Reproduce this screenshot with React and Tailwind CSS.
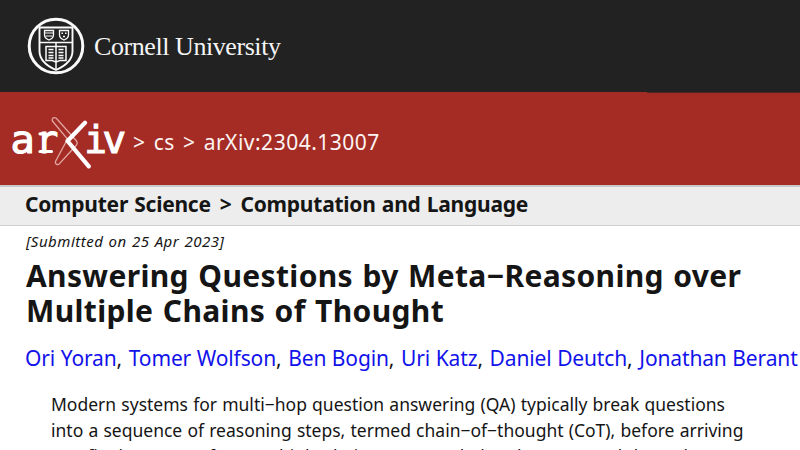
const sans = "font-['Noto_Sans','Open_Sans',sans-serif]";

function CornellSeal() {
  return (
    <svg className="h-[58px] w-[58px] shrink-0" viewBox="0 0 58 58" fill="none" stroke="#fafafa">
      <circle cx="29" cy="29" r="26.8" strokeWidth="3" />
      <path d="M12.5 10.5H45.5V34C45.5 44 37 49.500 29 53C21 49.500 12.500 44 12.500 34Z" strokeWidth="1.9" />
      <path d="M12.500 25.500H45.500M29 25.500V53" strokeWidth="1.5" />
      <path d="M17.500 13.500H26.500V18C26.500 20.500 24.500 22 22 23C19.500 22 17.500 20.500 17.500 18Z" strokeWidth="1.3" />
      <path d="M17.500 16H26.500M18.500 19H25.500" strokeWidth="1.1" />
      <path d="M32.500 13.500H41.500V18C41.500 20.500 39.500 22 37 23C34.500 22 32.500 20.500 32.500 18Z" strokeWidth="1.300" />
      <path d="M34.500 16.200H36M38 16.200H39.500M36 19.500H38" strokeWidth="1.600" />
      <path d="M19 29.500H39V43.500H33L29 45L25 43.500H19Z" strokeWidth="1.500" />
      <path d="M21.500 32.500H26.500M21.500 35.500H26.500M21.500 38.500H26.500M21.500 41H26.500M31.500 32.500H36.500M31.500 35.500H36.500M31.500 38.500H36.500M31.500 41H36.500" strokeWidth="1.500" />
    </svg>
  );
}

function ArxivLogo() {
  return (
    <svg className="h-[54px] w-[116px] shrink-0" viewBox="12 115 116 54" fill="none">
      <g fill="#fff" stroke="#fff" strokeWidth="1.1" fontFamily="'DejaVu Sans Mono', monospace" fontSize="37">
        <text transform="translate(10.500 152.800) scale(1.090 1)">a</text>
        <text transform="translate(36 152.800)">r</text>
        <text transform="translate(84.500 152.800)">i</text>
        <text transform="translate(102.600 152.800) scale(1.060 1)">v</text>
      </g>
      <path d="M40 151.500H51.500M40 133.800H45" stroke="#fff" strokeWidth="3.200" strokeLinecap="round" />
      <path d="M56.300 118.200Q54 116.800 52.500 118.500Q51.500 120 52.800 121.500L67.500 139L55.500 161.500Q55 164 57 164.500Q59 165 60 163L76.500 145Q78 143 76.500 141Z" stroke="#e3a5a1" strokeWidth="1.300" fill="#a42c25" />
      <path d="M85 122.800L67.500 141L88.800 166.300" stroke="#fff" strokeWidth="4.200" strokeLinecap="round" strokeLinejoin="round" />
    </svg>
  );
}

const authors = ["Ori Yoran", "Tomer Wolfson", "Ben Bogin", "Uri Katz", "Daniel Deutch", "Jonathan Berant"];

export default function App() {
  return (
    <div className={`flex h-[450px] w-[800px] flex-col overflow-hidden bg-white whitespace-nowrap text-[#151515] ${sans}`}>
      <header className="flex h-[92px] shrink-0 items-center bg-[#222] pl-[27px]">
        <CornellSeal />
        <span className="ml-[9px] pt-px font-['Palatino','Liberation_Serif',serif] text-[26px] leading-[30px] tracking-[-0.43px] text-[#f5f5f5]">
          Cornell University
        </span>
      </header>
      <div className="flex h-[93px] shrink-0 flex-col bg-[#a42c25]">
        <div className="ml-[647px] h-px shrink-0 bg-[#4a2523]" />
        <div className="flex grow items-center pt-[6px] pl-[12px]">
          <ArxivLogo />
          <span className="ml-[5px] text-[21px] leading-[30px] tracking-[0.5px] [word-spacing:2.200px] text-[#fcf4f3]">&gt; cs &gt; arXiv:2304.13007</span>
        </div>
      </div>
      <div className="flex h-[41px] shrink-0 items-center border-t-2 border-b border-t-[#c9c9c9] border-b-[#cfcfcf] bg-[#ededed] pb-[4px] pl-[25px] text-[21px] leading-[30px] font-bold tracking-[-0.25px]">
        <span className="[word-spacing:1px]">Computer Science</span>
        <span className="mx-[9px]">&gt;</span>
        <span className="[word-spacing:1px]">Computation and Language</span>
      </div>
      <main className="flex flex-col pl-[26px]">
        <p className="mt-[5px] text-[15px] leading-[20px] tracking-[0.5px] [word-spacing:0.800px] italic">[Submitted on 25 Apr 2023]</p>
        <h1 className="mt-[7px] text-[30px] leading-[35px] font-bold tracking-[0.35px] [word-spacing:1.300px]">
          <span className="block">Answering Questions by Meta−Reasoning over</span>
          <span className="block">Multiple Chains of Thought</span>
        </h1>
        <p className="mt-[15px] -ml-px text-[21px] leading-[30px] tracking-[-0.14px] [word-spacing:0.300px]">
          {authors.map((name, i) => (
            <span key={name}>
              <a className="text-[#1212ea]">{name}</a>
              {i < authors.length - 1 ? <span className="[word-spacing:1.400px]">, </span> : ""}
            </span>
          ))}
        </p>
        <div className="mt-[18px] pl-[25px] text-[17.500px] leading-[26px] [word-spacing:0.650px]">
          <p>Modern systems for multi−hop question answering (QA) typically break questions</p>
          <p>into a sequence of reasoning steps, termed chain−of−thought (CoT), before arriving</p>
          <p>at a final answer. Often, multiple chains are sampled and aggregated through a</p>
        </div>
      </main>
    </div>
  );
}
